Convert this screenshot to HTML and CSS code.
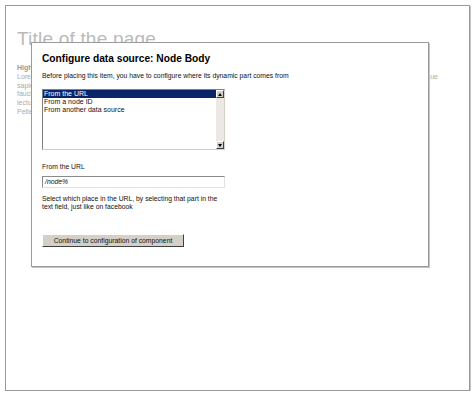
FILE: index.html
```html
<!DOCTYPE html>
<html>
<head>
<meta charset="utf-8">
<link rel="stylesheet" href="styles.css">
</head>
<body>
<div class="page">
  <h1 class="title">Title of the page</h1>
  <div class="lorem">
    <div class="line strong">Highlight of the article</div>
    <div class="line split"><span>Lorem ipsum dolor sit amet, consectetur adipiscing elit, sed do eiusmod tempor incididunt ut labore et dolore magna aliqua</span><span>que</span></div>
    <div class="line">sapien vitae pellentesque habitant morbi tristique senectus et netus</div>
    <div class="line">faucibus orci luctus et ultrices posuere cubilia curae</div>
    <div class="line">lectus non tortor vestibulum volutpat</div>
    <div class="line">Pellentesque habitant morbi tristique</div>
  </div>
</div>

<div class="dialog">
  <h2 class="dlg-title">Configure data source: Node Body</h2>
  <p class="intro">Before placing this item, you have to configure where its dynamic part comes from</p>
  <div class="listbox">
    <div class="options">
      <div class="opt selected">From the URL</div>
      <div class="opt">From a node ID</div>
      <div class="opt">From another data source</div>
    </div>
    <div class="scrollbar">
      <div class="sbtn"><svg width="4" height="3" viewBox="0 0 4 3"><path d="M2 0 L4 3 L0 3 Z" fill="#000"/></svg></div>
      <div class="track"></div>
      <div class="sbtn"><svg width="4" height="3" viewBox="0 0 4 3"><path d="M0 0 L4 0 L2 3 Z" fill="#000"/></svg></div>
    </div>
  </div>
  <div class="label">From the URL</div>
  <div class="input">/node%</div>
  <p class="help">Select which place in the URL, by selecting that part in the<br>text field, just like on facebook</p>
  <div class="button">Continue to configuration of component</div>
</div>
</body>
</html>
```

FILE: styles.css
```css
html, body {
  margin: 0;
  padding: 0;
  background: #fff;
}
body {
  padding: 5px 0 0 5px;
  font-family: "Liberation Sans", Arial, sans-serif;
}
.page {
  box-sizing: border-box;
  width: 465px;
  height: 386px;
  border: 1px solid #9a9a9a;
  box-shadow: 1px 1px 0 #c4c4c4;
  padding: 22px 0 0 11px;
  overflow: hidden;
}
.title {
  margin: 0;
  font-size: 19px;
  font-weight: normal;
  color: #bababa;
  line-height: 22px;
  letter-spacing: 0.2px;
}
.lorem {
  margin-top: 14px;
  width: 421px;
  font-size: 7px;
  line-height: 8.8px;
  color: #aaa;
}
.line {
  white-space: nowrap;
  overflow: hidden;
}
.line.strong {
  font-weight: bold;
  color: #999;
}
.line.split {
  display: flex;
  justify-content: space-between;
}
.dialog {
  position: absolute;
  left: 31px;
  top: 42px;
  box-sizing: border-box;
  width: 398px;
  height: 225px;
  background: #fff;
  border: 1px solid #9a9a9a;
  box-shadow: 1px 1px 0 #c4c4c4;
  padding: 9px 0 0 10px;
  font-size: 6.8px;
  color: #111;
}
.dlg-title {
  margin: 0;
  font-size: 10.2px;
  line-height: 14px;
  font-weight: bold;
  color: #000;
}
.intro {
  margin: 5px 0 0 0;
  line-height: 9px;
}
.listbox {
  margin-top: 9px;
  box-sizing: border-box;
  width: 183px;
  height: 61px;
  border: 1px solid #808080;
  border-right-color: #d4d0c8;
  border-bottom-color: #d4d0c8;
  display: flex;
  background: #fff;
}
.options {
  flex: 1;
}
.opt {
  height: 8px;
  line-height: 8px;
  padding-left: 1px;
  white-space: nowrap;
  font-size: 7px;
}
.opt.selected {
  background: #0a246a;
  color: #fff;
}
.scrollbar {
  width: 8px;
  display: flex;
  flex-direction: column;
  background: #ece9e4;
}
.track {
  flex: 1;
}
.sbtn {
  box-sizing: border-box;
  height: 8px;
  background: #d4d0c8;
  border: 1px solid;
  border-color: #fff #404040 #404040 #fff;
  display: flex;
  align-items: center;
  justify-content: center;
}
.label {
  margin-top: 12px;
  line-height: 9px;
}
.input {
  margin-top: 5px;
  box-sizing: border-box;
  width: 183px;
  height: 12px;
  border: 1px solid #8a8a8a;
  border-right-color: #e0e0e0;
  border-bottom-color: #e0e0e0;
  line-height: 10px;
  padding-left: 2px;
  font-style: italic;
}
.help {
  margin: 7px 0 0 0;
  line-height: 8px;
}
.button {
  margin-top: 23px;
  box-sizing: border-box;
  width: 142px;
  height: 13px;
  background: #d4d0c8;
  border: 1px solid;
  border-color: #fff #404040 #404040 #fff;
  text-align: center;
  line-height: 11px;
}
```
